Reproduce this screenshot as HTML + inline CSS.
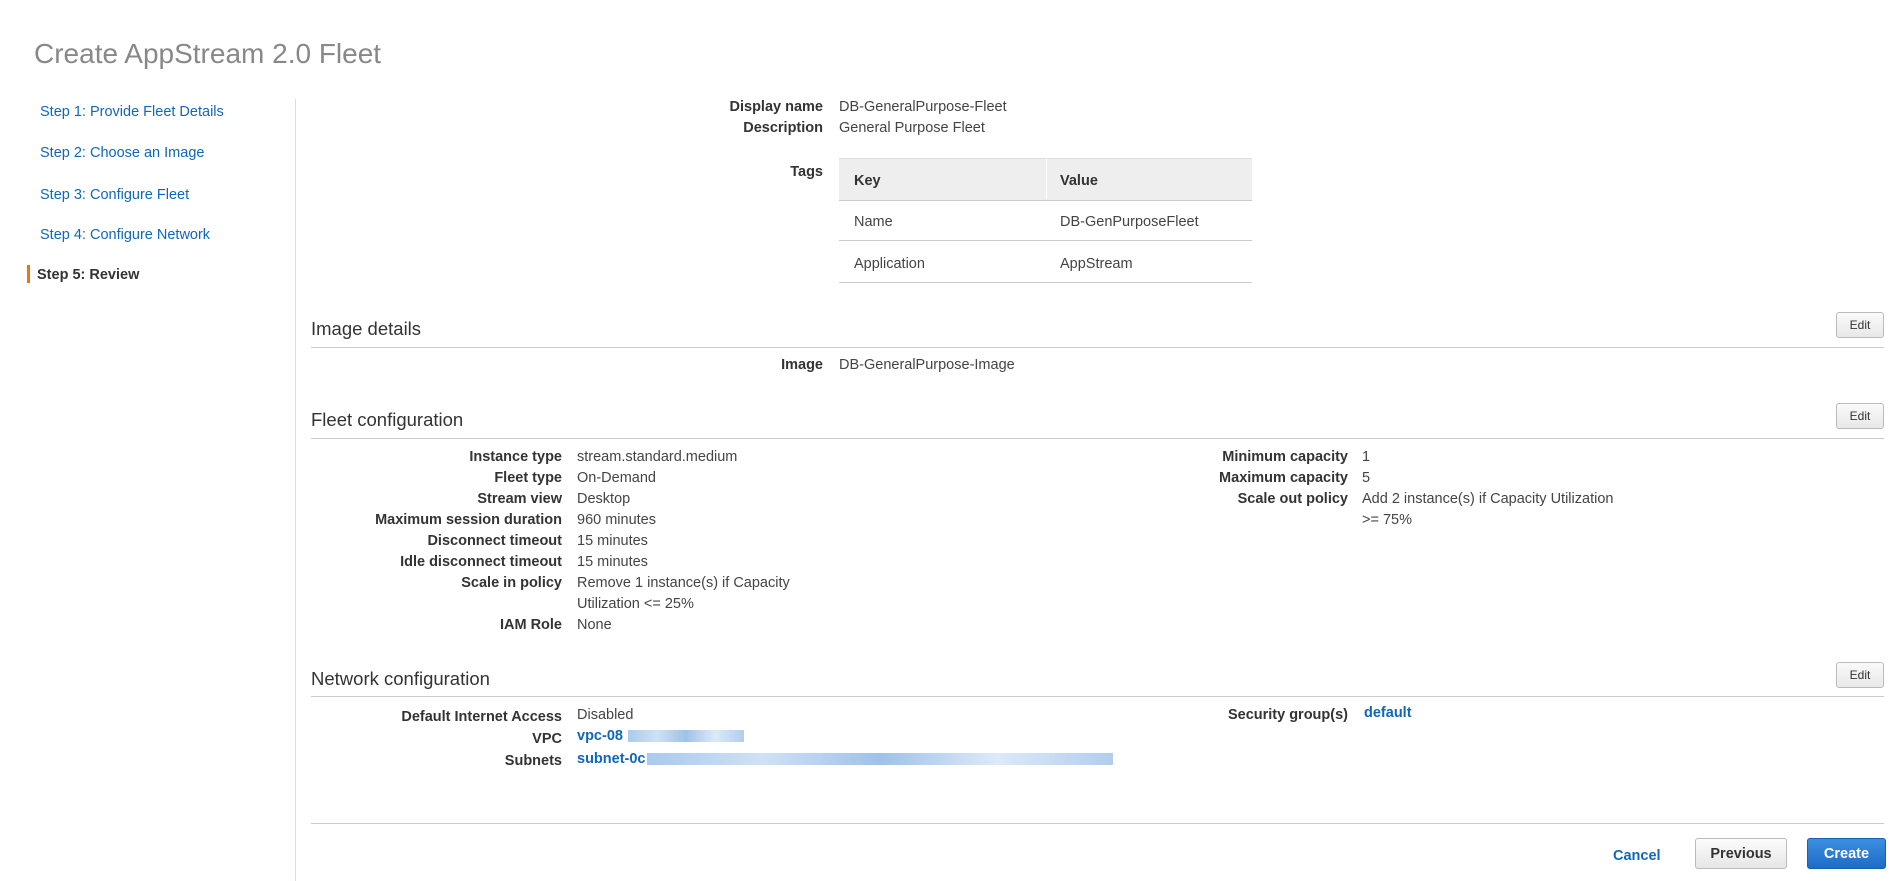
<!DOCTYPE html>
<html><head><style>
body{margin:0;width:1899px;height:881px;background:#fff;font-family:"Liberation Sans",Arial,sans-serif;font-size:14.5px;color:#444;position:relative;overflow:hidden}
.a{position:absolute;white-space:nowrap;line-height:18px;margin-top:2px}
.t{font-size:28px;color:#888;left:34px;top:36px;line-height:32px}
.nav{color:#1166bb;left:40px}
.lbl{font-weight:bold;color:#333;text-align:right}
.h{font-size:18.5px;color:#333;left:311px;line-height:22px}
.ln{position:absolute;left:311px;width:1573px;height:1px;background:#ccc}
.edit{position:absolute;left:1836px;width:46px;height:24px;border:1px solid #bbb;border-radius:3px;background:linear-gradient(#fafafa,#e8e8e8);font-size:12px;color:#333;text-align:center;line-height:24px}
.tb{position:absolute;left:839px;width:413px}
.lnk{color:#1166bb;font-weight:bold}
.blur{position:absolute;height:12px;background:linear-gradient(90deg,#9cc0e8,#c6dcf4,#8fb6e4,#d6e6f8,#a4c4ea);opacity:.85}
</style></head><body>
<div class="a t">Create AppStream 2.0 Fleet</div>
<div class="a nav" style="top:101px">Step 1: Provide Fleet Details</div>
<div class="a nav" style="top:142px">Step 2: Choose an Image</div>
<div class="a nav" style="top:184px">Step 3: Configure Fleet</div>
<div class="a nav" style="top:224px">Step 4: Configure Network</div>
<div style="position:absolute;left:27px;top:265px;width:3px;height:18px;background:#e47911"></div>
<div class="a" style="left:37px;top:264px;font-weight:bold;color:#333">Step 5: Review</div>
<div style="position:absolute;left:295px;top:99px;width:1px;height:782px;background:#ddd"></div>

<div class="a lbl" style="right:1076px;top:96px">Display name</div>
<div class="a" style="left:839px;top:96px">DB-GeneralPurpose-Fleet</div>
<div class="a lbl" style="right:1076px;top:117px">Description</div>
<div class="a" style="left:839px;top:117px">General Purpose Fleet</div>
<div class="a lbl" style="right:1076px;top:161px">Tags</div>
<div class="tb" style="top:158px;height:41px;background:#eee;border-top:1px solid #ddd;border-bottom:1px solid #ccc"></div>
<div style="position:absolute;left:1046px;top:158px;width:1px;height:41px;background:#fff"></div>
<div class="a" style="left:854px;top:170px;font-weight:bold;color:#333">Key</div>
<div class="a" style="left:1060px;top:170px;font-weight:bold;color:#333">Value</div>
<div class="a" style="left:854px;top:211px">Name</div>
<div class="a" style="left:1060px;top:211px">DB-GenPurposeFleet</div>
<div class="tb" style="top:240px;height:1px;background:#ccc"></div>
<div class="a" style="left:854px;top:253px">Application</div>
<div class="a" style="left:1060px;top:253px">AppStream</div>
<div class="tb" style="top:282px;height:1px;background:#ccc"></div>

<div class="a h" style="top:316px">Image details</div>
<div class="edit" style="top:312px">Edit</div>
<div class="ln" style="top:347px"></div>
<div class="a lbl" style="right:1076px;top:354px">Image</div>
<div class="a" style="left:839px;top:354px">DB-GeneralPurpose-Image</div>

<div class="a h" style="top:407px">Fleet configuration</div>
<div class="edit" style="top:403px">Edit</div>
<div class="ln" style="top:438px"></div>
<div class="a lbl" style="right:1337px;top:445px;line-height:21px">Instance type<br>Fleet type<br>Stream view<br>Maximum session duration<br>Disconnect timeout<br>Idle disconnect timeout<br>Scale in policy<br><br>IAM Role</div>
<div class="a" style="left:577px;top:445px;line-height:21px">stream.standard.medium<br>On-Demand<br>Desktop<br>960 minutes<br>15 minutes<br>15 minutes<br>Remove 1 instance(s) if Capacity<br>Utilization &lt;= 25%<br>None</div>
<div class="a lbl" style="right:551px;top:445px;line-height:21px">Minimum capacity<br>Maximum capacity<br>Scale out policy</div>
<div class="a" style="left:1362px;top:445px;line-height:21px">1<br>5<br>Add 2 instance(s) if Capacity Utilization<br>&gt;= 75%</div>

<div class="a h" style="top:666px">Network configuration</div>
<div class="edit" style="top:662px">Edit</div>
<div class="ln" style="top:696px"></div>
<div class="a lbl" style="right:1337px;top:704px;line-height:22px">Default Internet Access<br>VPC<br>Subnets</div>
<div class="a" style="left:577px;top:704px">Disabled</div>
<div class="a lnk" style="left:577px;top:725px">vpc-08</div>
<div class="blur" style="left:628px;top:730px;width:116px"></div>
<div class="a lnk" style="left:577px;top:748px">subnet-0c</div>
<div class="blur" style="left:647px;top:753px;width:466px"></div>
<div class="a lbl" style="right:551px;top:704px">Security group(s)</div>
<div class="a lnk" style="left:1364px;top:702px">default</div>

<div class="ln" style="top:823px"></div>
<div class="a lnk" style="left:1613px;top:845px">Cancel</div>
<div style="position:absolute;left:1695px;top:838px;width:90px;height:29px;border:1px solid #bbb;border-radius:3px;background:linear-gradient(#fcfcfc,#e6e6e6);font-weight:bold;color:#333;text-align:center;line-height:31px">Previous</div>
<div style="position:absolute;left:1807px;top:838px;width:77px;height:29px;border:1px solid #1a5fae;border-radius:3px;background:linear-gradient(#3b8fe0,#1d6cc8);font-weight:bold;color:#fff;text-align:center;line-height:31px">Create</div>
</body></html>
